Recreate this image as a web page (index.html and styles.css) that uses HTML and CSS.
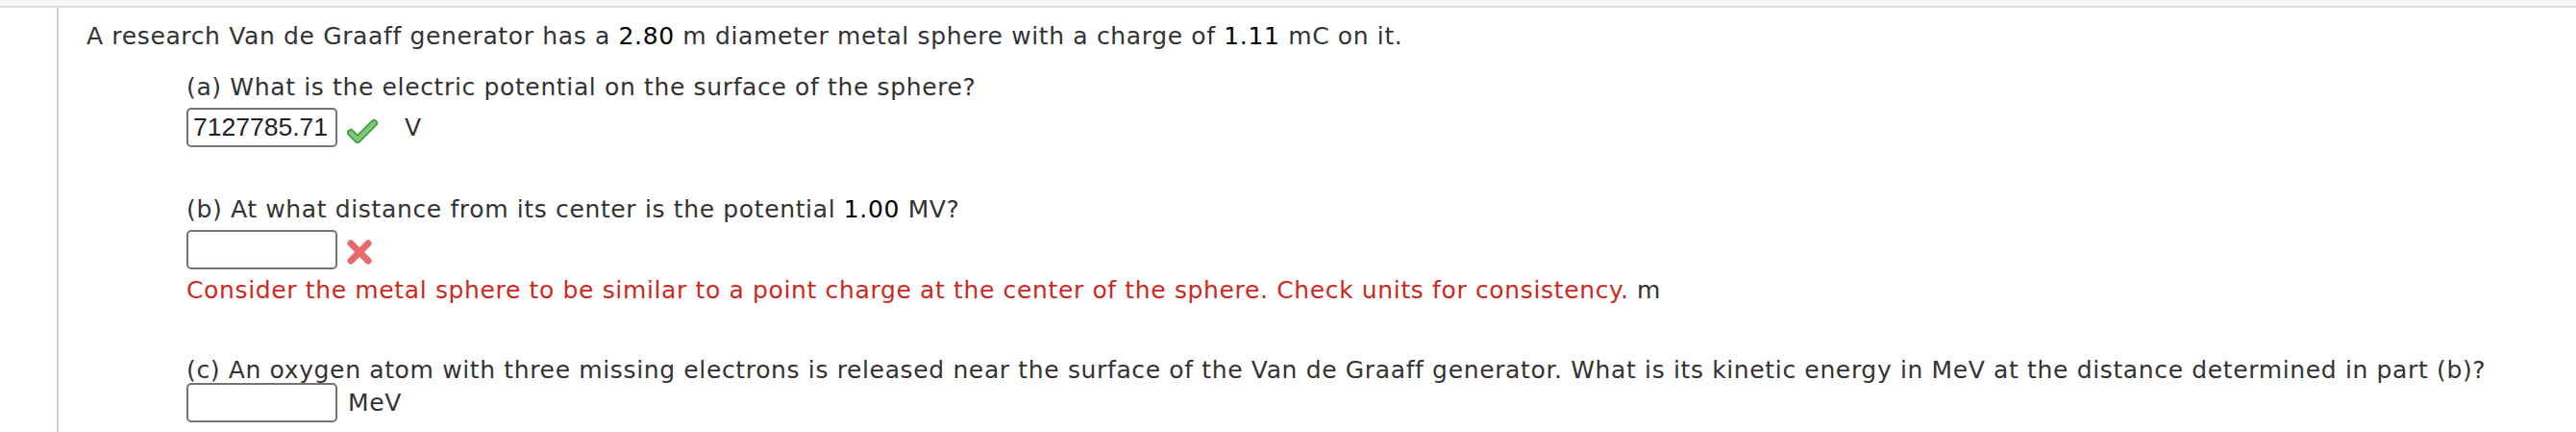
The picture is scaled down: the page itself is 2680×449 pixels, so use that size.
FILE: index.html
```html
<!DOCTYPE html>
<html lang="en">
<head>
<meta charset="utf-8">
<title>Van de Graaff generator</title>
<link rel="stylesheet" href="styles.css">
</head>
<body>
<div class="topbar"></div>
<div class="question">
  <p class="stem">A research Van de Graaff generator has a <span class="num">2.80</span> m diameter metal sphere with a charge of <span class="num">1.11</span> mC on it.</p>

  <div class="part part-a">
    <p class="prompt">(a) What is the electric potential on the surface of the sphere?</p>
    <div class="answer">
      <input class="field" type="text" value="7127785.71" readonly>
      <svg class="mark check" width="32" height="26" viewBox="0 0 32 26" aria-label="correct">
        <polyline points="4,15 11,22 28,5" fill="none" stroke="#45a045" stroke-width="8" stroke-linecap="round" stroke-linejoin="round"/>
        <polyline points="4,15 11,22 28,5" fill="none" stroke="#7cc874" stroke-width="4.5" stroke-linecap="round" stroke-linejoin="round"/>
      </svg>
      <span class="unit unit-far">V</span>
    </div>
  </div>

  <div class="part part-b">
    <p class="prompt">(b) At what distance from its center is the potential <span class="num">1.00</span> MV?</p>
    <div class="answer">
      <input class="field" type="text" value="" readonly>
      <svg class="mark cross" width="28" height="26" viewBox="0 0 28 26" aria-label="incorrect">
        <path d="M5 4 L23 22 M23 4 L5 22" fill="none" stroke="#e46a6c" stroke-width="7" stroke-linecap="round"/>
      </svg>
    </div>
    <p class="feedback"><span class="hint">Consider the metal sphere to be similar to a point charge at the center of the sphere. Check units for consistency.</span> <span class="unit">m</span></p>
  </div>

  <div class="part part-c">
    <p class="prompt">(c) An oxygen atom with three missing electrons is released near the surface of the Van de Graaff generator. What is its kinetic energy in MeV at the distance determined in part (b)?</p>
    <div class="answer answer-tight">
      <input class="field" type="text" value="" readonly>
      <span class="unit unit-near">MeV</span>
    </div>
  </div>
</div>
</body>
</html>
```

FILE: styles.css
```css
html, body {
  margin: 0;
  padding: 0;
  background: #ffffff;
}

body {
  font-family: "DejaVu Sans", Verdana, sans-serif;
  font-size: 25px;
  line-height: 36px;
  letter-spacing: 0.64px;
  color: #333333;
}

.topbar {
  height: 6px;
  background: #f7f7f7;
  border-bottom: 2px solid #dddddd;
}

.question {
  box-sizing: border-box;
  min-height: 441px;
  margin-left: 59px;
  border-left: 2px solid #d2d2d2;
  padding: 12px 0 0 29px;
}

p {
  margin: 0;
}

.num {
  color: #000000;
}

.part {
  padding-left: 104px;
}

.part-a {
  margin-top: 17px;
}

.part-b {
  margin-top: 47px;
}

.part-c {
  margin-top: 47px;
}

.answer {
  display: flex;
  align-items: center;
  margin-top: 3px;
  height: 41px;
}

.answer-tight {
  margin-top: -5px;
}

.field {
  box-sizing: border-box;
  width: 157px;
  height: 41px;
  margin: 0;
  padding: 0 5px;
  border: 2px solid #747474;
  border-radius: 5px;
  background: #ffffff;
  font-family: "Liberation Sans", Arial, sans-serif;
  font-size: 26.5px;
  letter-spacing: 0;
  color: #222222;
  outline: none;
}

.mark {
  display: block;
  flex: none;
}

.check {
  margin-left: 10px;
  margin-top: 6px;
}

.cross {
  margin-left: 9px;
  margin-top: 4px;
}

.unit-far {
  margin-left: 28px;
}

.unit-near {
  margin-left: 11px;
}

.feedback {
  margin-top: 4px;
}

.hint {
  color: #cc2a1f;
}
```
